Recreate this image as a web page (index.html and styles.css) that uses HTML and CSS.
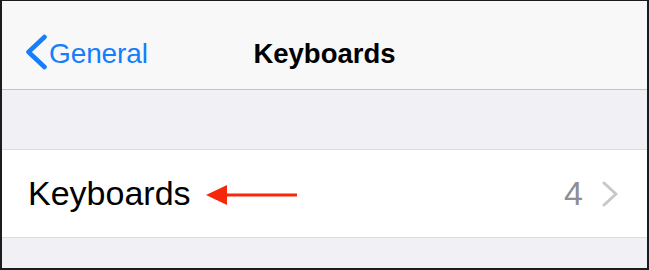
FILE: index.html
```html
<!DOCTYPE html>
<html lang="en">
<head>
  <meta charset="UTF-8" />
  <title>Keyboards</title>
  <link rel="stylesheet" href="styles.css">
</head>
<body>
  <div class="screen">
    <!-- Navigation bar -->
    <div class="navbar">
      <div class="back">
        <svg class="back-chevron" width="24" height="36" viewBox="0 0 24 36">
          <polyline points="20.5,3 4.5,18 20.5,33" fill="none" stroke="#147efb" stroke-width="4.5" stroke-linecap="round" stroke-linejoin="round"/>
        </svg>
        <span class="back-label">General</span>
      </div>
      <div class="nav-title">Keyboards</div>
      <div></div>
    </div>

    <div class="group-gap"></div>

    <div class="cell">
      <span class="cell-label">Keyboards</span>
      <!-- red pointer arrow -->
      <svg class="pointer" width="92" height="22" viewBox="0 0 92 22">
        <line x1="18" y1="11" x2="91" y2="11" stroke="#f5290a" stroke-width="3"/>
        <polygon points="0,11 21,1 21,21" fill="#f5290a"/>
      </svg>
      <span class="cell-value">4</span>
      <svg class="chevron" width="16" height="26" viewBox="0 0 16 26">
        <polyline points="2,2 14,13 2,24" fill="none" stroke="#c7c7cc" stroke-width="3" stroke-linecap="round" stroke-linejoin="round"/>
      </svg>
    </div>

    <div class="group-bottom"></div>
  </div>
</body>
</html>
```

FILE: styles.css
```css
body {
  margin: 0;
  background-color: #1c1c1c;
  font-family: 'Liberation Sans', Arial, sans-serif;
}

.screen {
  box-sizing: border-box;
  width: 649px;
  height: 270px;
  border-top: 1px solid #1c1c1c;
  border-left: 2px solid #1c1c1c;
  border-right: 2px solid #1c1c1c;
  border-bottom: 2px solid #1c1c1c;
  background-color: #f1f1f5;
  display: flex;
  flex-direction: column;
  overflow: hidden;
}

.navbar {
  height: 89px;
  box-sizing: border-box;
  padding-top: 17px;
  background-color: #f8f8f8;
  border-bottom: 1px solid #c4c4c7;
  display: grid;
  grid-template-columns: 1fr auto 1fr;
  align-items: center;
}

.back {
  display: flex;
  align-items: center;
  padding-left: 22px;
}

.back-chevron {
  display: block;
  margin-top: -3px;
}

.back-label {
  color: #147efb;
  font-size: 28px;
  margin-left: 1px;
  letter-spacing: -0.1px;
}

.nav-title {
  color: #000;
  font-size: 27.5px;
  font-weight: bold;
}

.group-gap {
  height: 59px;
  border-bottom: 1px solid #dcdce0;
}

.cell {
  height: 87px;
  background-color: #fff;
  border-bottom: 1px solid #dcdce0;
  display: flex;
  align-items: center;
  padding: 0 29px 0 26px;
}

.cell-label {
  color: #000;
  font-size: 34px;
}

.pointer {
  display: block;
  margin-left: 15px;
  margin-top: 3px;
}

.cell-value {
  margin-left: auto;
  color: #8e8e93;
  font-size: 34px;
}

.chevron {
  display: block;
  margin-left: 19px;
}

.group-bottom {
  flex: 1;
}
```
